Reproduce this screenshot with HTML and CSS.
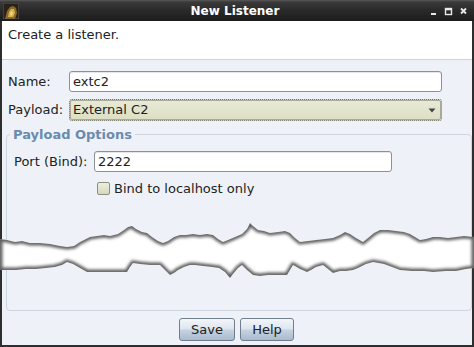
FILE: index.html
```html
<!DOCTYPE html>
<html>
<head>
<meta charset="utf-8">
<link rel="stylesheet" href="styles.css">
</head>
<body>
<div class="window">
  <div class="titlebar">
    <svg class="app-icon" width="16" height="16" viewBox="0 0 16 16">
      <rect width="16" height="16" fill="#2a2218"/>
      <path d="M2 16 L4 8 L7 4 L10 3 L13 5 L14 10 L12 16 Z" fill="#8a6a2a"/>
      <path d="M5 14 L6 9 L8 6 L11 6 L12 10 L10 14 Z" fill="#d8b04a"/>
      <path d="M7 10 L9 8 L10 11 L8 13 Z" fill="#f0d88a"/>
      <rect x="0" y="0" width="16" height="16" fill="none" stroke="#5a5a5a" stroke-width="1"/>
    </svg>
    <div class="title">New Listener</div>
    <div class="wm-buttons">
      <svg width="48" height="12" viewBox="0 0 48 12">
        <rect x="5" y="8" width="5" height="2" fill="#e8e8e8"/>
        <rect x="19.5" y="3.5" width="6" height="6" fill="none" stroke="#e8e8e8" stroke-width="1.4"/>
        <rect x="19.5" y="3.5" width="6" height="1.8" fill="#e8e8e8"/>
        <path d="M35 3.5 L40 8.5 M40 3.5 L35 8.5" stroke="#e8e8e8" stroke-width="1.8"/>
      </svg>
    </div>
  </div>
  <div class="desc">Create a listener.</div>
  <div class="content">
    <div class="row">
      <span class="label label-main">Name:</span>
      <div class="input wide">extc2</div>
    </div>
    <div class="row">
      <span class="label label-main">Payload:</span>
      <div class="combo wide">
        <span>External C2</span>
        <svg class="arrow" width="8" height="5" viewBox="0 0 8 5"><path d="M0.5 0.5 L7.5 0.5 L4 4.5 Z" fill="#444"/></svg>
      </div>
    </div>
    <fieldset class="group">
      <legend>Payload Options</legend>
      <div class="row">
        <span class="label label-port">Port (Bind):</span>
        <div class="input port">2222</div>
      </div>
      <div class="check-row">
        <span class="checkbox"></span>
        <span>Bind to localhost only</span>
      </div>
    </fieldset>
    <div class="buttons">
      <button class="btn btn-save">Save</button>
      <button class="btn btn-help">Help</button>
    </div>
  </div>
  <svg class="tear" width="474" height="70" viewBox="0 218 474 70">
    <defs>
      <clipPath id="tearclip">
        <path id="tearshape" d="M0 239 L7 240 L15 242 L22 241 L30 243 L40 243 L50 244 L60 246 L67 247 L74 246 L80 242 L86 239 L90 237 L97 236 L104 235 L110 236 L118 234 L124 230 L128 227 L132 226 L136 229 L142 232 L147 233 L152 237 L158 241 L163 243 L168 241 L174 237 L180 235 L186 235 L193 234 L200 235 L207 234 L213 235 L218 239 L223 242 L228 240 L235 237 L242 234 L247 229 L250 223 L253 226 L258 230 L264 231 L270 233 L278 232 L285 231 L290 233 L295 238 L300 242 L308 241 L316 240 L325 239 L333 238 L340 235 L345 232 L350 234 L356 238 L363 242 L368 238 L374 233 L380 230 L388 230 L396 231 L404 232 L410 234 L415 237 L420 240 L426 239 L433 237 L440 237 L448 238 L456 237 L464 236 L474 237 L474 268 L466 269 L456 271 L446 271 L433 272 L424 271 L412 271 L400 270 L392 267 L384 264 L373 262 L366 264 L358 268 L353 270 L346 271 L340 271 L333 273 L328 269 L323 265 L316 267 L311 270 L307 272 L300 269 L295 266 L293 265 L290 270 L287 275 L278 275 L268 275 L260 276 L253 275 L247 270 L242 265 L238 268 L233 274 L230 278 L225 272 L219 268 L212 267 L203 266 L195 265 L190 265 L184 267 L178 270 L174 273 L170 275 L166 271 L160 265 L150 265 L140 264 L133 263 L130 267 L127 272 L118 272 L106 272 L96 272 L87 272 L80 268 L73 264 L67 262 L62 265 L55 267 L46 268 L36 269 L26 269 L16 270 L8 270 L0 270 Z"/>
      </clipPath>
      <filter id="blur" x="-5%" y="-50%" width="110%" height="200%">
        <feGaussianBlur stdDeviation="1.8"/>
      </filter>
    </defs>
    <g clip-path="url(#tearclip)">
      <rect x="0" y="218" width="474" height="70" fill="#ffffff"/>
      <use href="#tearshape" fill="none" stroke="#5e5e5e" stroke-width="5" filter="url(#blur)"/>
    </g>
  </svg>
</div>
</body>
</html>
```
FILE: styles.css
```css
html, body {
  margin: 0;
  padding: 0;
  background: #2b2b2b;
}
body {
  width: 474px;
  height: 347px;
  overflow: hidden;
  font-family: "DejaVu Sans", "Liberation Sans", sans-serif;
  font-size: 13px;
  color: #222;
}
.window {
  position: relative;
  width: 474px;
  height: 347px;
  box-sizing: border-box;
  display: flex;
  flex-direction: column;
  border-left: 2px solid #2e2e2e;
  border-right: 2px solid #2e2e2e;
  border-bottom: 2px solid #2e2e2e;
  background: #eef2f8;
}
.titlebar {
  height: 21px;
  flex: none;
  margin: 0 -2px;
  display: flex;
  align-items: center;
  background: linear-gradient(#5a5a5a 0px, #3a3a3a 2px, #2a2a2a 10px, #1c1c1c 21px);
  position: relative;
}
.app-icon {
  margin-left: 3px;
  flex: none;
}
.title {
  flex: 1;
  text-align: center;
  color: #ffffff;
  font-weight: bold;
  font-size: 12px;
  padding-left: 25px;
}
.wm-buttons {
  flex: none;
  width: 48px;
  display: flex;
  align-items: center;
}
.desc {
  flex: none;
  height: 39px;
  background: #ffffff;
  border-bottom: 1px solid #cfd4dc;
  padding: 5px 6px 0;
  box-sizing: border-box;
  line-height: 17px;
}
.content {
  flex: 1;
  display: flex;
  flex-direction: column;
  padding: 11px 3px 0 4px;
}
.row {
  display: flex;
  align-items: center;
  height: 21px;
  margin-bottom: 7px;
}
.label-main {
  width: 61px;
  padding-left: 2px;
}
.label-port {
  width: 80px;
  padding-left: 3px;
}
.input {
  height: 21px;
  box-sizing: border-box;
  border: 1px solid #8c9198;
  border-radius: 3px;
  background: #fff;
  padding: 0 3px;
  line-height: 19px;
  box-shadow: inset 0 1px 0 #e4e6ea;
}
.wide {
  width: 373px;
}
.port {
  width: 298px;
}
.combo {
  height: 22px;
  box-sizing: border-box;
  border: 1px dotted #6c6f60;
  outline: 1px solid #a8ab98;
  outline-offset: -2px;
  border-radius: 3px;
  background: linear-gradient(#e8ead6, #dcdfc4);
  padding: 0 5px 0 3px;
  display: flex;
  align-items: center;
  justify-content: space-between;
}
.arrow {
  margin-top: 1px;
}
.group {
  margin: 0;
  padding: 0 6px 0 4px;
  border: 1px solid #cfd5df;
  border-radius: 4px;
  height: 184px;
  box-sizing: border-box;
  width: 466px;
  flex: none;
}
.group legend {
  color: #6a8aae;
  font-weight: bold;
  font-size: 13px;
  padding: 0 3px;
  margin-left: -1px;
}
.group .row {
  margin-top: 9px;
  margin-bottom: 0;
}
.check-row {
  display: flex;
  align-items: center;
  margin-top: 9px;
  padding-left: 86px;
}
.checkbox {
  width: 11px;
  height: 11px;
  border: 1px solid #8c8f80;
  border-radius: 2px;
  background: linear-gradient(#eceede, #d6d9bd);
  margin-right: 4px;
  flex: none;
}
.buttons {
  display: flex;
  justify-content: center;
  gap: 5px;
  margin-top: 7px;
  padding-right: 2px;
}
.btn {
  height: 23px;
  box-sizing: border-box;
  border: 1px solid #6f7d8d;
  border-radius: 3px;
  background: linear-gradient(#f3f6fa 0%, #dfe6ef 45%, #c4d1df 55%, #a9bbcf 100%);
  font-family: "DejaVu Sans", "Liberation Sans", sans-serif;
  font-size: 13px;
  color: #222;
  padding: 0;
}
.btn-save { width: 56px; }
.btn-help { width: 54px; }
.tear {
  position: absolute;
  left: -2px;
  top: 218px;
}
```
